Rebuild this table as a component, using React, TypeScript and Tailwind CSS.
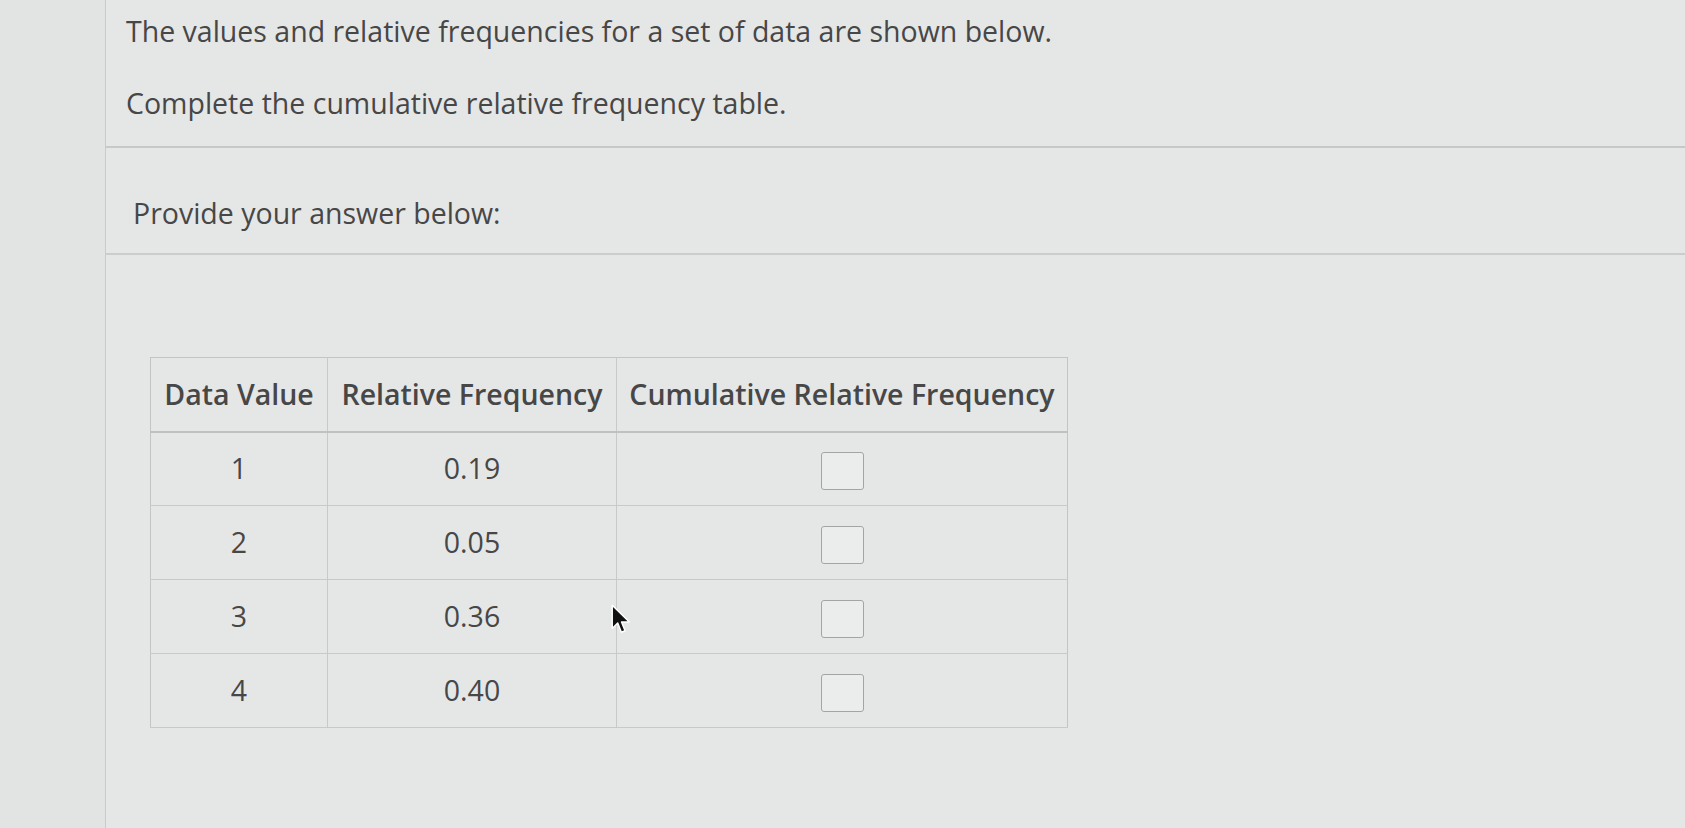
import React from "react";

const rows = [
  { value: "1", freq: "0.19" },
  { value: "2", freq: "0.05" },
  { value: "3", freq: "0.36" },
  { value: "4", freq: "0.40" },
];

function Cursor() {
  return (
    <svg className="absolute left-[461px] top-[246px]" width="22" height="34" viewBox="0 0 18 26">
      <path d="M1 1 L1 20 L5.5 15.5 L8.5 23 L11.5 21.8 L8.6 14.6 L15 14.6 Z" fill="#111" stroke="#fff" strokeWidth="1.2" strokeLinejoin="round" />
    </svg>
  );
}

export default function App() {
  return (
    <div className="flex h-[828px] w-full bg-[#e5e6e6] text-[#474747] font-['Open_Sans',sans-serif] overflow-hidden">
      {/* Left gutter */}
      <div className="w-[106px] shrink-0 border-r border-[#c9cac9] bg-[#e2e3e3]" />

      {/* Question panel */}
      <div className="flex-1 flex flex-col">
        <div className="h-[148px] border-b-2 border-[#c7c8c8] pl-[20px] pt-[12px]">
          <p className="text-[28.5px] leading-[38px]">The values and relative frequencies for a set of data are shown below.</p>
          <p className="mt-[34px] text-[28.5px] leading-[38px]">Complete the cumulative relative frequency table.</p>
        </div>

        <div className="h-[107px] border-b-2 border-[#cbcccc] pl-[27px] pt-[46px]">
          <p className="text-[28.5px] leading-[38px]">Provide your answer below:</p>
        </div>

        <div className="pl-[44px] pt-[102px]">
          <div className="relative w-fit">
            <table className="border-collapse border border-[#c3c4c4] text-[28.5px]">
              <thead>
                <tr className="h-[74px] border-b-2 border-[#bfc0c0]">
                  <th className="w-[177px] border-r border-[#c8c9c9] px-[8px] font-semibold whitespace-nowrap">Data Value</th>
                  <th className="w-[289px] border-r border-[#c8c9c9] px-[8px] font-semibold whitespace-nowrap">Relative Frequency</th>
                  <th className="w-[451px] px-[8px] font-semibold whitespace-nowrap">Cumulative Relative Frequency</th>
                </tr>
              </thead>
              <tbody>
                {rows.map((r) => (
                  <tr key={r.value} className="h-[74px] border-b border-[#c8c9c9]">
                    <td className="border-r border-[#c8c9c9] text-center">{r.value}</td>
                    <td className="border-r border-[#c8c9c9] text-center">{r.freq}</td>
                    <td className="text-center">
                      <input
                        type="text"
                        aria-label={`Cumulative relative frequency for ${r.value}`}
                        className="h-[38px] w-[43px] rounded-[3px] border-[1.5px] border-[#a3a4a4] bg-[#ebecec] align-middle"
                      />
                    </td>
                  </tr>
                ))}
              </tbody>
            </table>
            <Cursor />
          </div>
        </div>
      </div>
    </div>
  );
}
